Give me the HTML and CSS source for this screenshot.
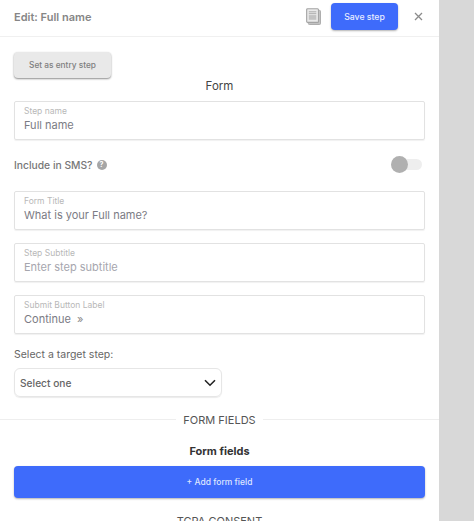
FILE: index.html
```html
<!DOCTYPE html>
<html lang="en">
<head>
    <meta charset="UTF-8">
    <meta name="viewport" content="width=device-width, initial-scale=1.0">
    <title>Edit step</title>
    <link rel="stylesheet" href="styles.css">
</head>
<body>

<div class="panel">
    <header class="topbar">
        <h1 class="topbar-title">Edit: Full name</h1>
        <svg class="doc-icon" width="15" height="17" viewBox="0 0 16 18">
            <rect x="2.5" y="2.5" width="13" height="15" rx="1" fill="#c4c4c4" stroke="#a9a9a9"/>
            <rect x="0.7" y="0.7" width="12.6" height="14.6" rx="1" fill="#e9e9e9" stroke="#a4a4a4" stroke-width="1.2"/>
            <path d="M3 4h8M3 6h8" stroke="#a8a8a8"/>
            <rect x="3" y="7.5" width="8" height="5" fill="#c2c2c2"/>
        </svg>
        <button type="button" class="btn-save">Save step</button>
        <svg class="close-icon" width="9" height="9" viewBox="0 0 9 9">
            <path d="M1 1l7 7M8 1l-7 7" stroke="#8b8b8b" stroke-width="1.3" fill="none"/>
        </svg>
    </header>

    <div class="content">
        <button type="button" class="btn-entry">Set as entry step</button>
        <h2 class="form-heading">Form</h2>

        <div class="field">
            <label class="field-label">Step name</label>
            <div class="field-value">Full name</div>
        </div>

        <div class="sms-row">
            <span class="sms-label">Include in SMS?</span>
            <span class="help-icon">?</span>
            <span class="toggle"><span class="toggle-knob"></span></span>
        </div>

        <div class="field">
            <label class="field-label">Form Title</label>
            <div class="field-value">What is your Full name?</div>
        </div>

        <div class="field field-next">
            <label class="field-label">Step Subtitle</label>
            <div class="field-value placeholder">Enter step subtitle</div>
        </div>

        <div class="field field-next">
            <label class="field-label">Submit Button Label</label>
            <div class="field-value">Continue <span class="chevrons">»</span></div>
        </div>

        <div class="target-label">Select a target step:</div>
        <div class="select-box">
            <span>Select one</span>
            <svg width="12" height="8" viewBox="0 0 12 8">
                <path d="M1 1.2l5 5 5-5" stroke="#222" stroke-width="1.6" fill="none"/>
            </svg>
        </div>
    </div>

    <div class="divider"><span>FORM FIELDS</span></div>
    <div class="section">
        <h3 class="section-title">Form fields</h3>
        <button type="button" class="btn-add">+ Add form field</button>
    </div>
    <div class="divider-plain">TCPA CONSENT</div>
</div>

</body>
</html>
```

FILE: styles.css
```css
* { margin: 0; padding: 0; box-sizing: border-box; font-family: Inter, "Liberation Sans", sans-serif; }
html, body { height: 100%; overflow: hidden; }
body { background: #d8d8d8; }
.panel { width: 439px; height: 521px; background: #fff; overflow: hidden; }

.topbar {
    height: 37px; display: flex; align-items: center;
    padding: 0 16px 3px 14px; border-bottom: 1px solid #f0f0f0;
}
.topbar-title { font-size: 11px; font-weight: 600; color: #868686; flex: 1; }
.doc-icon { margin-right: 10px; }
.btn-save {
    width: 67px; height: 27px; background: #3e6bfb; color: #e8edff; border: none; border-radius: 4px;
    font-size: 8.7px; font-weight: 500; box-shadow: 0 1px 2px rgba(0, 0, 0, 0.3);
}
.close-icon { margin-left: 16px; }

.content { padding: 15px 14px 0; }
.btn-entry {
    display: block; width: 97px; height: 26px; background: #e9e9e9; color: #808080; border: none;
    border-radius: 4px; font-size: 8.3px; font-weight: 500; box-shadow: 0 1px 2px rgba(0, 0, 0, 0.45);
}
.form-heading { font-size: 11.5px; font-weight: 400; color: #444; text-align: center; line-height: 14px; margin: 1px 0 8px; }

.field {
    height: 39px; border: 1px solid #e2e2e2; border-radius: 2px; padding: 4px 9px 0;
    box-shadow: 0 1px 1px rgba(0, 0, 0, 0.06);
}
.field-next { margin-top: 13px; }
.field-label { display: block; font-size: 8.5px; color: #b8b8b8; line-height: 10px; }
.field-value { font-size: 11px; color: #7b7b84; line-height: 20px; margin-top: -1px; }
.field-value.placeholder { color: #a6a6ae; }
.chevrons { font-size: 11px; margin-left: 3px; color: #8b8b8b; }

.sms-row { display: flex; align-items: center; height: 51px; padding-bottom: 2px; }
.sms-label { font-size: 10.3px; font-weight: 500; color: #777; }
.help-icon {
    width: 10px; height: 10px; margin-left: 4px; border-radius: 50%; background: #a6a6a6;
    color: #fff; font-size: 7px; font-weight: 700; line-height: 10px; text-align: center;
}
.toggle {
    position: relative; width: 30px; height: 11px; margin-left: auto; margin-right: 3px;
    background: #eeeeee; border-radius: 6px;
}
.toggle-knob {
    position: absolute; left: -1px; top: -3px; width: 17px; height: 17px;
    border-radius: 50%; background: #b0b0b0;
}

.target-label { font-size: 10.5px; font-weight: 400; color: #666; line-height: 14px; margin-top: 14px; }
.select-box {
    width: 208px; height: 29px; margin-top: 6px; display: flex; align-items: center; justify-content: space-between;
    padding: 0 5px; border: 1px solid #e6e6e6; border-radius: 6px; font-size: 10.2px; font-weight: 500; color: #666;
    box-shadow: 0 1px 1px rgba(0, 0, 0, 0.08);
}

.divider { display: flex; align-items: center; gap: 7px; margin-top: 14px; height: 17px; }
.divider::before, .divider::after { content: ""; flex: 1; height: 1px; background: #eeeeee; }
.divider span { font-size: 11px; color: #555; }
.section { padding: 0 14px; }
.section-title { font-size: 11px; font-weight: 700; color: #333; text-align: center; line-height: 14px; margin-top: 16px; }
.btn-add {
    display: block; width: 100%; height: 32px; margin-top: 8px; background: #3e6bfb; color: #dfe6ff; border: none;
    border-radius: 4px; font-size: 8.5px; font-weight: 500; box-shadow: 0 1px 2px rgba(0, 0, 0, 0.3);
}
.divider-plain { font-size: 11px; color: #555; text-align: center; line-height: 14px; margin-top: 16px; }
```
